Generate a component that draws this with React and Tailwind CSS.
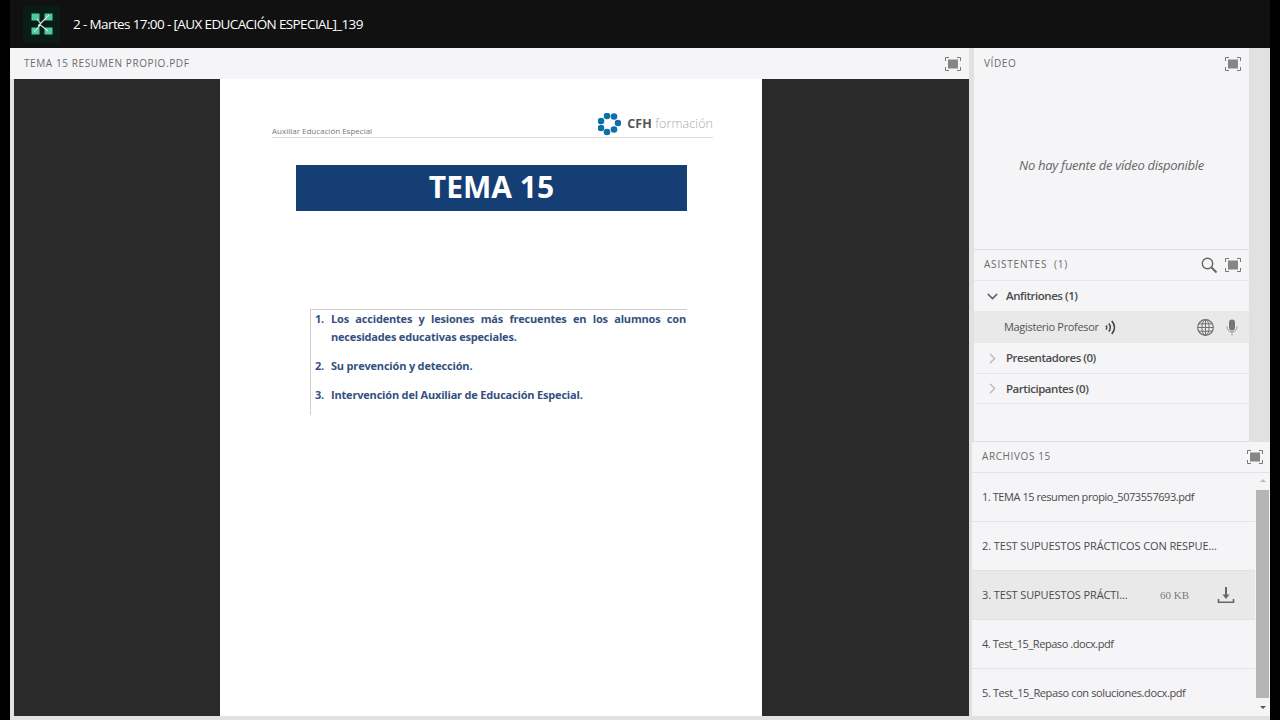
import React from "react";
import { ChevronDown, ChevronRight } from "lucide-react";

const font = "font-['Open_Sans',sans-serif]";

const files = [
  { name: "1. TEMA 15 resumen propio_5073557693.pdf", tracking: "tracking-[-0.04em]" },
  { name: "2. TEST SUPUESTOS PRÁCTICOS CON RESPUE...", tracking: "tracking-[-0.01em]" },
  { name: "3. TEST SUPUESTOS PRÁCTI...", tracking: "tracking-[-0.01em]", size: "60 KB", active: true },
  { name: "4. Test_15_Repaso .docx.pdf", tracking: "tracking-[-0.04em]" },
  { name: "5. Test_15_Repaso con soluciones.docx.pdf", tracking: "tracking-[-0.035em]", last: true },
];

function MaximizeIcon() {
  return (
    <svg width="16" height="14" viewBox="0 0 16 14" fill="none" className="shrink-0">
      <path d="M0.5 4V0.5H4M12 0.5H15.5V4M15.5 10V13.5H12M4 13.5H0.5V10" stroke="#777" strokeWidth="1" />
      <rect x="3" y="2.5" width="10" height="9" fill="#858585" />
    </svg>
  );
}

function AppLogo() {
  return (
    <div className="w-[37px] h-[37px] bg-[#0a1c17] flex items-center justify-center">
      <svg width="22" height="22" viewBox="0 0 22 22">
        <rect x="0.500" y="0.500" width="8" height="7" fill="#4fc9a0" />
        <rect x="13.500" y="0.500" width="8" height="7" fill="#4fc9a0" />
        <rect x="0.500" y="14.500" width="8" height="7" fill="#4fc9a0" />
        <rect x="13.500" y="14.500" width="8" height="7" fill="#4fc9a0" />
        <path d="M6 6L10 11M18 2L7 13M3 19L9.500 12L17 18" stroke="#d8efe6" strokeWidth="1.100" fill="none" />
      </svg>
    </div>
  );
}

function CfhLogo() {
  const dots = [[9, 3], [16, 3.500], [20, 10], [16, 16.500], [9, 19], [3, 15], [3, 8]];
  return (
    <svg width="23" height="23" viewBox="0 0 23 23" className="shrink-0">
      {dots.map(([cx, cy]) => (
        <circle key={cx + "-" + cy} cx={cx} cy={cy} r="3.300" fill="#0f6fa8" />
      ))}
    </svg>
  );
}

function PanelHeader({ title, children, className, tracking = "tracking-[0.06em]" }) {
  return (
    <div className={"h-[31px] flex items-center justify-between shrink-0 " + className}>
      <span className={"mb-[2px] text-[10px] leading-none font-medium text-[#6b6b6b] whitespace-pre " + tracking}>{title}</span>
      {children}
    </div>
  );
}

function GroupRow({ label, open, height }) {
  return (
    <div className={"flex items-center border-[#e6e6e8] ml-[2px] pl-[8px] " + height + (open ? "" : " border-b")}>
      {open ? (
        <ChevronDown size={17} strokeWidth={2.200} className="text-[#666]" />
      ) : (
        <ChevronRight size={17} strokeWidth={2} className="text-[#bbb]" />
      )}
      <span className="ml-[5px] text-[11.500px] font-semibold text-[#4b4b4b] tracking-[-0.04em]">{label}</span>
    </div>
  );
}

function FileRow({ name, tracking, size, active, last }) {
  return (
    <div className={"h-[49px] flex items-center pl-[10px] shrink-0 border-[#e2e2e4] " + (last ? "" : "border-b ") + (active ? "bg-[#e9e9e9]" : "")}>
      <span className={"text-[11px] text-[#4b4b4b] whitespace-nowrap " + tracking}>{name}</span>
      {size && (
        <>
          <span className="ml-auto font-['Liberation_Serif',serif] text-[11px] text-[#7a7a7a]">{size}</span>
          <svg width="18" height="18" viewBox="0 0 18 18" fill="none" className="ml-[28px] mr-[20px]">
            <path d="M9 1V10" stroke="#666" strokeWidth="2" />
            <path d="M5.500 8.500H12.500L9 13Z" fill="#666" />
            <path d="M1.500 13V16.200H16.500V13" stroke="#666" strokeWidth="1.600" />
          </svg>
        </>
      )}
    </div>
  );
}

export default function App() {
  return (
    <div className={"w-[1280px] h-[720px] bg-black px-[10px] flex flex-col overflow-hidden " + font}>
      <div className="h-[48px] shrink-0 bg-[#111111] flex items-center pl-[13px]">
        <AppLogo />
        <span className="ml-[13px] text-[13.500px] text-white tracking-[-0.046em] whitespace-nowrap">
          2 - Martes 17:00 - [AUX EDUCACIÓN ESPECIAL]_139
        </span>
      </div>

      <div className="h-[672px] bg-[#e1e1e1] flex pb-[4px]">
        <div className="w-[959px] shrink-0 flex flex-col">
          <PanelHeader title="TEMA 15 RESUMEN PROPIO.PDF" className="bg-[#f5f4f6] pl-[14px] pr-[8px]">
            <MaximizeIcon />
          </PanelHeader>
          <div className="flex-1 ml-[4px] pr-[1px] bg-[#2a2a2a] flex justify-center overflow-hidden">
            <div className="w-[542px] bg-white pt-[32px] pl-[52px] pr-[49px]">
              <div className="h-[27px] flex items-end justify-between border-b border-[#dddddd]">
                <span className="text-[8px] leading-none text-[#777] pb-[2px]">Auxiliar Educación Especial</span>
                <div className="flex items-center gap-[6px] pb-[1px]">
                  <CfhLogo />
                  <span className="text-[12.500px] leading-none text-[#aaa] font-light tracking-[0.006em]">
                    <b className="text-[#555] font-bold">CFH</b> formación
                  </span>
                </div>
              </div>
              <div className="mt-[27px] ml-[24px] w-[391px] h-[46px] pb-[3px] bg-[#153e75] flex items-center justify-center text-white text-[30px] font-bold">
                TEMA 15
              </div>
              <div className="mt-[98px] ml-[38px] w-[377px] h-[106px] border-l border-t border-[#cfcfcf] pl-[4px] text-[#34507f] text-[11px] font-bold tracking-[-0.017em]">
                <div className="flex">
                  <span className="w-[16px] shrink-0 leading-[18px]">1.</span>
                  <p className="w-[355px] text-justify leading-[18px]">
                    Los accidentes y lesiones más frecuentes en los alumnos con necesidades educativas especiales.
                  </p>
                </div>
                <div className="flex mt-[11px] leading-[18px]">
                  <span className="w-[16px] shrink-0">2.</span>
                  <p>Su prevención y detección.</p>
                </div>
                <div className="flex mt-[11px] leading-[18px]">
                  <span className="w-[16px] shrink-0">3.</span>
                  <p>Intervención del Auxiliar de Educación Especial.</p>
                </div>
              </div>
            </div>
          </div>
        </div>

        <div className="flex-1 flex flex-col min-w-0">
          <div className="h-[393px] shrink-0 pl-[5px] pr-[21px] flex flex-col gap-[1px]">
            <div className="h-[201px] shrink-0 bg-[#f5f4f6] flex flex-col">
              <PanelHeader title="VÍDEO" className="pl-[10px] pr-[8px]">
                <MaximizeIcon />
              </PanelHeader>
              <div className="flex-1 flex justify-center pt-[80px]">
                <span className="text-[13px] leading-none italic text-[#666] tracking-[-0.022em]">No hay fuente de vídeo disponible</span>
              </div>
            </div>
            <div className="flex-1 bg-[#f5f4f6] flex flex-col">
              <PanelHeader title="ASISTENTES  (1)" tracking="tracking-[0.08em]" className="pl-[10px] pr-[8px] border-b border-[#e6e6e8]">
                <div className="flex items-center gap-[8px]">
                  <svg width="16" height="16" viewBox="0 0 16 16" fill="none">
                    <circle cx="6.500" cy="6.500" r="5.200" stroke="#666" strokeWidth="1.400" />
                    <path d="M10.500 10.500L15.500 15.500" stroke="#666" strokeWidth="2" />
                  </svg>
                  <MaximizeIcon />
                </div>
              </PanelHeader>
              <GroupRow label="Anfitriones (1)" open height="h-[30px]" />
              <div className="h-[32px] bg-[#e9e9e9] flex items-center pl-[30px] pr-[11px]">
                <span className="text-[11px] text-[#555] tracking-[-0.029em]">Magisterio Profesor</span>
                <svg width="11" height="15" viewBox="0 0 11 15" fill="none" className="ml-[6px]">
                  <path d="M1 5.500C2 6.500 2 8.500 1 9.500M3.800 3.500C5.800 6 5.800 9 3.800 11.500" stroke="#444" strokeWidth="1.500" />
                  <path d="M6.800 1C10.300 5 10.300 10 6.800 14" stroke="#444" strokeWidth="1.700" />
                </svg>
                <svg width="17" height="17" viewBox="0 0 17 17" fill="none" className="ml-auto" stroke="#707070" strokeWidth="1">
                  <circle cx="8.500" cy="8.500" r="7.800" strokeWidth="1.200" />
                  <ellipse cx="8.500" cy="8.500" rx="3.600" ry="7.800" />
                  <path d="M8.500 0.700V16.300M0.700 8.500H16.300M1.800 4.800H15.200M1.800 12.200H15.200" />
                </svg>
                <svg width="12" height="17" viewBox="0 0 12 17" fill="none" className="ml-[12px]">
                  <rect x="3" y="0.500" width="6" height="11" rx="3" fill="#777" />
                  <path d="M1 7.500C1 11 3 12.800 6 12.800C9 12.800 11 11 11 7.500M6 12.800V16.500" stroke="#999" strokeWidth="1" />
                </svg>
              </div>
              <GroupRow label="Presentadores (0)" height="h-[31px]" />
              <GroupRow label="Participantes (0)" height="h-[30px]" />
            </div>
          </div>

          <div className="h-[274px] mt-[1px] ml-[3px] bg-[#f5f4f6] flex flex-col">
            <PanelHeader title="ARCHIVOS 15" className="pl-[10px] pr-[7px] border-b border-[#e2e2e4]">
              <MaximizeIcon />
            </PanelHeader>
            <div className="flex-1 flex min-h-0">
              <div className="w-[283px] shrink-0 flex flex-col overflow-hidden">
                {files.map((f) => (
                  <FileRow key={f.name} {...f} />
                ))}
              </div>
              <div className="flex-1 flex flex-col items-center justify-between pt-[6px] pb-[7px]">
                <div className="w-0 h-0 border-x-[3px] border-x-transparent border-b-[3px] border-b-[#bbb]" />
                <div className="w-[13px] h-[208px] bg-[#b5b5b5]" />
                <div className="w-0 h-0 border-x-[3px] border-x-transparent border-t-[3px] border-t-[#555]" />
              </div>
            </div>
          </div>
        </div>
      </div>
    </div>
  );
}
